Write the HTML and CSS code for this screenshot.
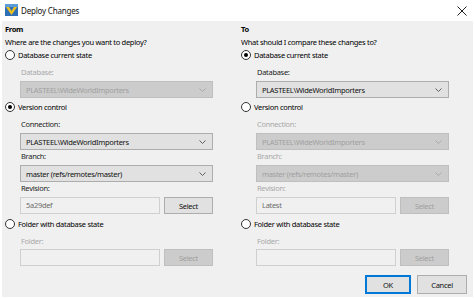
FILE: index.html
```html
<!DOCTYPE html>
<html lang="en">
<head>
    <meta charset="UTF-8">
    <title>Deploy Changes</title>
    <link rel="stylesheet" href="styles.css">
</head>
<body>
    <div class="window">
        <div class="titlebar">
            <svg class="app-icon" width="13" height="12" viewBox="0 0 13 12">
                <rect x="0" y="0" width="13" height="12" fill="#2f6fb5"/>
                <rect x="0" y="0" width="13" height="3" fill="#5b9bd8"/>
                <path d="M1 3 L6.5 11 L12 3 L9 3 L6.5 7 L4 3 Z" fill="#f2c21a"/>
            </svg>
            <span class="title">Deploy Changes</span>
            <svg class="close" width="10" height="10" viewBox="0 0 10 10">
                <path d="M0.5 0.5 L9.5 9.5 M9.5 0.5 L0.5 9.5" stroke="#222" stroke-width="1"/>
            </svg>
        </div>
        <div class="content">
            <div class="columns">
                <div class="column">
                    <div class="heading">From</div>
                    <div class="subtitle">Where are the changes you want to deploy?</div>

                    <label class="radio r-first"><span class="dot"></span>Database current state</label>
                    <div class="field-label disabled l-first">Database:</div>
                    <div class="combo disabled"><span>PLASTEEL\WideWorldImporters</span><svg class="chev" width="7" height="4" viewBox="0 0 7 4"><path d="M0.5 0.5 L3.5 3.5 L6.5 0.5" fill="none" stroke="currentColor"/></svg></div>

                    <label class="radio r-next"><span class="dot checked"></span>Version control</label>
                    <div class="field-label l-first">Connection:</div>
                    <div class="combo"><span>PLASTEEL\WideWorldImporters</span><svg class="chev" width="7" height="4" viewBox="0 0 7 4"><path d="M0.5 0.5 L3.5 3.5 L6.5 0.5" fill="none" stroke="currentColor"/></svg></div>
                    <div class="field-label">Branch:</div>
                    <div class="combo"><span>master (refs/remotes/master)</span><svg class="chev" width="7" height="4" viewBox="0 0 7 4"><path d="M0.5 0.5 L3.5 3.5 L6.5 0.5" fill="none" stroke="currentColor"/></svg></div>
                    <div class="field-label">Revision:</div>
                    <div class="picker">
                        <div class="textbox">5a29def</div>
                        <div class="btn">Select</div>
                    </div>

                    <label class="radio r-last"><span class="dot"></span>Folder with database state</label>
                    <div class="field-label disabled l-first">Folder:</div>
                    <div class="picker p-last">
                        <div class="textbox disabled"></div>
                        <div class="btn disabled">Select</div>
                    </div>
                </div>

                <div class="column">
                    <div class="heading">To</div>
                    <div class="subtitle">What should I compare these changes to?</div>

                    <label class="radio r-first"><span class="dot checked"></span>Database current state</label>
                    <div class="field-label l-first">Database:</div>
                    <div class="combo"><span>PLASTEEL\WideWorldImporters</span><svg class="chev" width="7" height="4" viewBox="0 0 7 4"><path d="M0.5 0.5 L3.5 3.5 L6.5 0.5" fill="none" stroke="currentColor"/></svg></div>

                    <label class="radio r-next"><span class="dot"></span>Version control</label>
                    <div class="field-label disabled l-first">Connection:</div>
                    <div class="combo disabled"><span>PLASTEEL\WideWorldImporters</span><svg class="chev" width="7" height="4" viewBox="0 0 7 4"><path d="M0.5 0.5 L3.5 3.5 L6.5 0.5" fill="none" stroke="currentColor"/></svg></div>
                    <div class="field-label disabled">Branch:</div>
                    <div class="combo disabled"><span>master (refs/remotes/master)</span><svg class="chev" width="7" height="4" viewBox="0 0 7 4"><path d="M0.5 0.5 L3.5 3.5 L6.5 0.5" fill="none" stroke="currentColor"/></svg></div>
                    <div class="field-label disabled">Revision:</div>
                    <div class="picker">
                        <div class="textbox">Latest</div>
                        <div class="btn disabled">Select</div>
                    </div>

                    <label class="radio r-last"><span class="dot"></span>Folder with database state</label>
                    <div class="field-label disabled l-first">Folder:</div>
                    <div class="picker p-last">
                        <div class="textbox disabled"></div>
                        <div class="btn disabled">Select</div>
                    </div>
                </div>
            </div>
            <div class="footer">
                <div class="btn primary">OK</div>
                <div class="btn wide">Cancel</div>
            </div>
        </div>
    </div>
</body>
</html>
```

FILE: styles.css
```css
body {
    margin: 0;
    padding: 0;
    font-family: "Noto Sans", "Open Sans", sans-serif;
    font-size: 7.5px;
    letter-spacing: -0.3px;
    color: #000;
    background-color: #fff;
}
.window {
    width: 474px;
    height: 299px;
    display: flex;
    flex-direction: column;
}
.titlebar {
    height: 21px;
    display: flex;
    align-items: center;
    background-color: #fff;
}
.app-icon {
    margin-left: 5px;
    margin-top: -2px;
}
.title {
    margin-left: 3px;
    font-size: 8px;
    letter-spacing: -0.2px;
    color: #111;
}
.close {
    margin-left: auto;
    margin-right: 7px;
}
.content {
    margin: 0 1px 2px 2px;
    flex: 1;
    background-color: #f0f0f0;
    display: flex;
    flex-direction: column;
}
.columns {
    display: grid;
    grid-template-columns: 236px 1fr;
    padding-top: 1px;
}
.column {
    padding-left: 3px;
}
.heading {
    font-weight: bold;
    line-height: 14px;
}
.subtitle {
    line-height: 13px;
}
.radio {
    display: flex;
    align-items: center;
    height: 12px;
    line-height: 12px;
}
.r-next {
    margin-top: 3px;
}
.r-last {
    margin-top: 4px;
}
.dot {
    width: 8px;
    height: 8px;
    border: 1px solid #333;
    border-radius: 50%;
    background-color: #fff;
    margin-right: 3px;
    position: relative;
    flex-shrink: 0;
}
.dot.checked::after {
    content: "";
    position: absolute;
    left: 2px;
    top: 2px;
    width: 4px;
    height: 4px;
    border-radius: 50%;
    background-color: #000;
}
.field-label {
    margin-left: 16px;
    line-height: 13px;
    color: #222;
}
.field-label.l-first {
    margin-top: 5px;
}
.field-label.disabled {
    color: #a8a8a8;
}
.combo {
    margin: 2px 0 0 15px;
    width: 193px;
    height: 17px;
    box-sizing: border-box;
    border: 1px solid #adadad;
    background-color: #e1e1e1;
    display: flex;
    align-items: center;
    padding: 0 6px 0 5px;
    color: #111;
}
.combo.disabled {
    background-color: #cccccc;
    border-color: #bfbfbf;
    color: #a0a0a0;
}
.combo span {
    flex: 1;
}
.chev {
    color: #606060;
}
.combo.disabled .chev {
    color: #a8a8a8;
}
.picker {
    margin: 2px 0 0 15px;
    width: 193px;
    display: flex;
    gap: 4px;
    height: 17px;
}
.picker.p-last {
    margin-top: 1px;
}
.textbox {
    flex: 1;
    box-sizing: border-box;
    border: 1px solid #d0d0d0;
    background-color: #f0f0f0;
    color: #6d6d6d;
    padding-left: 5px;
    line-height: 15px;
}
.textbox.disabled {
    border-color: #cfcfcf;
}
.btn {
    width: 49px;
    box-sizing: border-box;
    border: 1px solid #adadad;
    background-color: #e1e1e1;
    display: flex;
    align-items: center;
    justify-content: center;
    color: #111;
}
.btn.disabled {
    background-color: #cccccc;
    border-color: #bfbfbf;
    color: #a0a0a0;
}
.footer {
    margin-top: auto;
    margin-bottom: 3px;
    display: flex;
    justify-content: flex-end;
    gap: 6px;
    padding-right: 6px;
    height: 19px;
}
.footer .btn {
    width: 46px;
}
.footer .btn.wide {
    width: 50px;
}
.btn.primary {
    border: 2px solid #0078d7;
}
```
